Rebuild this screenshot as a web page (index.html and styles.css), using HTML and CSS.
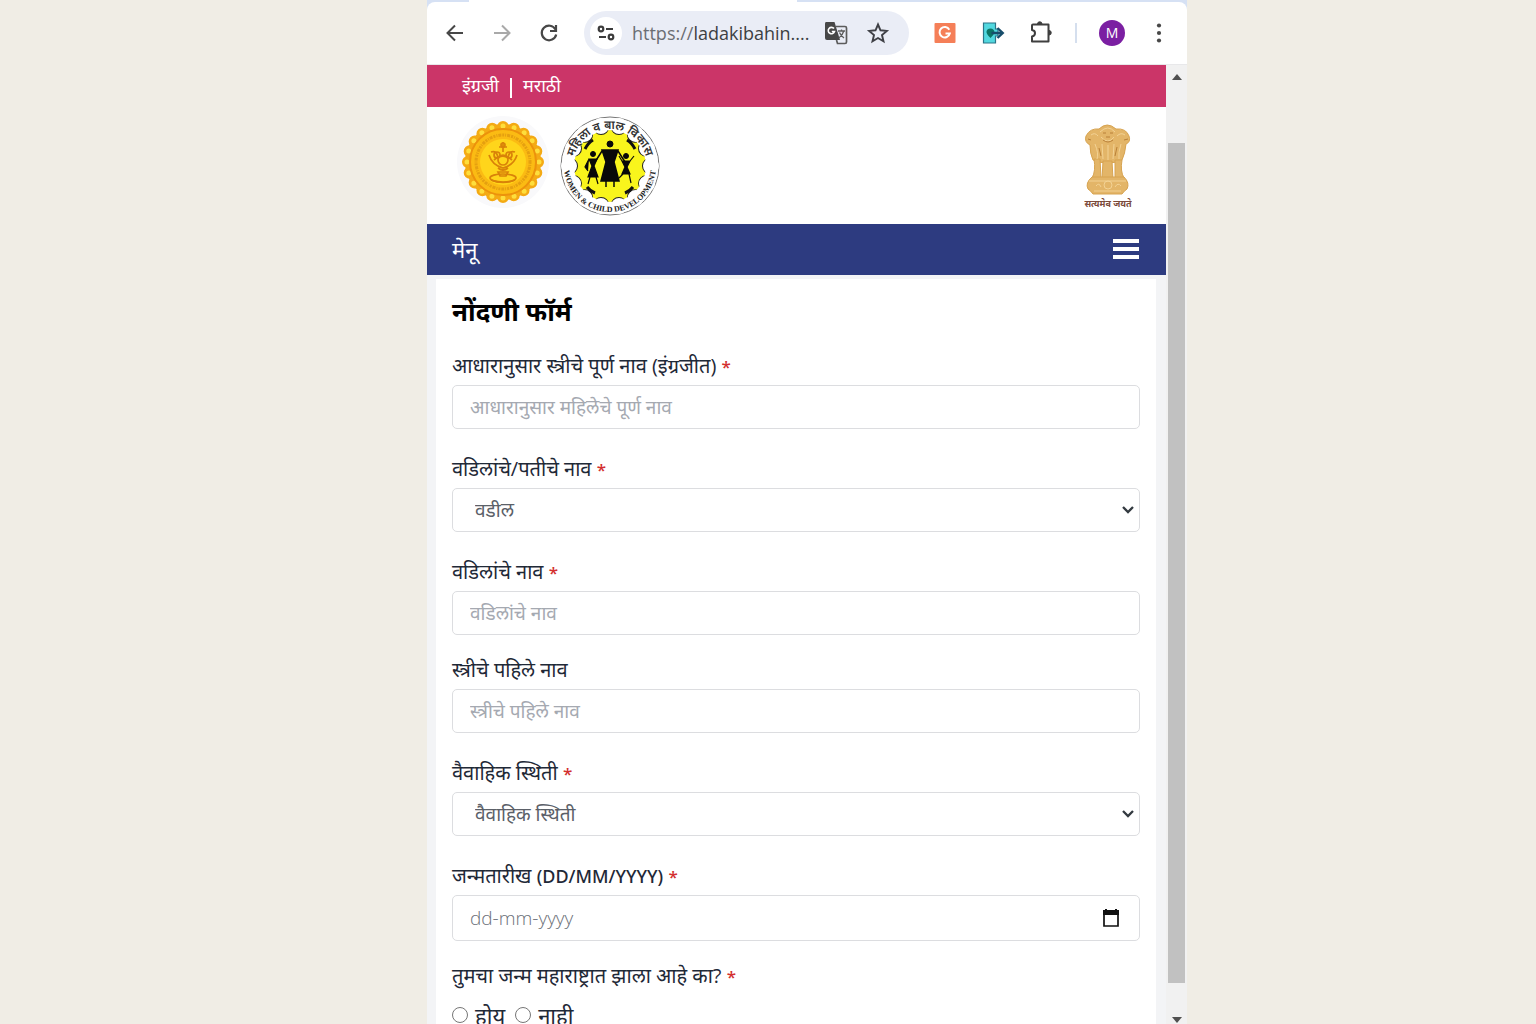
FILE: index.html
```html
<!DOCTYPE html>
<html lang="mr">
<head>
<meta charset="utf-8">
<meta name="viewport" content="width=device-width, initial-scale=1">
<title>नोंदणी फॉर्म</title>
<link rel="stylesheet" href="styles.css">
</head>
<body>
<div class="browser">
  <div class="tabstrip"><span class="tabstrip__active"></span></div>
  <div class="toolbar">
    <div class="toolbar__nav">
      <button class="icon-btn" aria-label="Back"><svg viewBox="0 0 24 24"><path d="M20 12H5M12 4.500L4.500 12L12 19.500" fill="none" stroke="#474747" stroke-width="2"/></svg></button>
      <button class="icon-btn" aria-label="Forward"><svg viewBox="0 0 24 24"><path d="M4 12H19M12 4.500L19.500 12L12 19.500" fill="none" stroke="#a9a9a9" stroke-width="2"/></svg></button>
      <button class="icon-btn" aria-label="Reload"><svg viewBox="0 0 24 24"><path d="M18.500 8.500A7.300 7.300 0 1 0 19.200 13.500" fill="none" stroke="#474747" stroke-width="2.200"/><path d="M19 4V10H13" fill="none" stroke="#474747" stroke-width="2.200"/></svg></button>
    </div>
    <div class="omnibox">
      <button class="omnibox__site" aria-label="Site information"><svg viewBox="0 0 24 24" fill="none" stroke="#3c3c3c" stroke-width="2.200"><circle cx="7" cy="8" r="2.300"/><path d="M12 8H19M5 16H12"/><circle cx="17" cy="16" r="2.300"/></svg></button>
      <span class="omnibox__url"><span class="omnibox__scheme">https://</span>ladakibahin....</span>
      <button class="icon-btn" aria-label="Translate"><svg viewBox="0 0 24 24"><path d="M2 1H10.500L16 19H3Q1 19 1 17V2.500Q1 1 2 1Z" fill="#474747"/><path d="M12 5.500H21Q22.500 5.500 22.500 7V21Q22.500 22.500 21 22.500H13.500L12.500 19" fill="none" stroke="#5c5c5c" stroke-width="1.700"/><path d="M10 7.600A3.200 3.200 0 1 0 10.500 10.500H7.800" fill="none" stroke="#fff" stroke-width="1.600"/><path d="M14 10H21M17.500 8.500V10M19.800 10Q18.500 14.500 14.800 17M15.500 11.500Q17 15 20 17" fill="none" stroke="#5c5c5c" stroke-width="1.300"/></svg></button>
      <button class="icon-btn" aria-label="Bookmark"><svg viewBox="0 0 24 24"><path d="M12 3.500L14.500 9.300L20.800 9.900L16 14L17.500 20.300L12 17L6.500 20.300L8 14L3.200 9.900L9.500 9.300Z" fill="none" stroke="#3f4046" stroke-width="1.900"/></svg></button>
    </div>
    <div class="toolbar__extensions">
      <button class="icon-btn" aria-label="Extension G"><svg viewBox="0 0 24 24"><rect x="1.500" y="2" width="21" height="20" rx="1" fill="#f57f58"/><path d="M16.300 8.700A5.200 5.200 0 1 0 16.800 12.500H12.500" fill="none" stroke="#fff" stroke-width="2"/></svg></button>
      <button class="icon-btn" aria-label="Extension"><svg viewBox="0 0 24 24"><path d="M2.500 2H14.500V8H17V15H14.500V22H2.500Z" fill="#52d8df" stroke="#2b7488" stroke-width="1.200"/><path d="M9.500 17Q5 12.500 5.500 10.500Q6 7.500 9.500 7.500Q13 7.500 13.500 11Q13 14 9.500 17Z" fill="#0b7566"/><path d="M10.500 12H21M16.500 7L21.800 12L16.500 17" fill="none" stroke="#174d6b" stroke-width="2.300"/></svg></button>
      <button class="icon-btn" aria-label="Extensions"><svg viewBox="0 0 24 24"><path d="M4 3.500H19.500V20.500H3V15.500Q6 15 6 12Q6 9.500 3 9V4.500Q3 3.500 4 3.500Z" fill="none" stroke="#3f3f3f" stroke-width="2" stroke-linejoin="round"/><path d="M8.500 3A2 2 0 0 1 13 3ZM20 9.500A2 2 0 0 1 20 14Z" fill="#3f3f3f" stroke="#3f3f3f"/></svg></button>
    </div>
    <div class="toolbar__profile">
      <span class="toolbar__divider"></span>
      <button class="avatar" aria-label="Profile">M</button>
      <button class="icon-btn" aria-label="More"><svg viewBox="0 0 24 24" fill="#474747"><circle cx="12" cy="4.500" r="2.100"/><circle cx="12" cy="12" r="2.100"/><circle cx="12" cy="19.500" r="2.100"/></svg></button>
    </div>
  </div>

  <div class="viewport">
    <div class="page">
      <div class="langbar">
        <a href="#">इंग्रजी</a><span class="langbar__sep"></span><a href="#">मराठी</a>
      </div>
      <header class="masthead">
        <div class="masthead__logos">
          <svg class="seal" viewBox="0 0 96 96" role="img" aria-label="Government seal">
            <circle cx="48" cy="46" r="46" fill="#f9f9fb"/>
            <g transform="translate(0 -2)">
            <circle cx="48" cy="48" r="38" fill="#f0a312"/>
            <circle cx="48" cy="48" r="35" fill="none" stroke="#f4aa14" stroke-width="12" stroke-linecap="round" stroke-dasharray="0 1" pathLength="20"/>
            <circle cx="48" cy="48" r="36" fill="none" stroke="#fede3c" stroke-width="5" stroke-linecap="round" stroke-dasharray="0 1" pathLength="20"/>
            <circle cx="48" cy="48" r="33" fill="#fbbb13" stroke="#ec920c" stroke-width="2"/>
            <circle cx="48" cy="48" r="27" fill="none" stroke="#e5a010" stroke-width="3" stroke-dasharray="2 1 1 1 3 1"/>
            <circle cx="48" cy="48" r="23" fill="#ffd51b"/>
            <g fill="none" stroke="#d98209" stroke-width="1.700">
              <path d="M48 28V38M44 33H52M34 41Q37 51 48 54Q59 51 62 41M36 38Q42 36 43 44M60 38Q54 36 53 44M39 46Q48 38 57 46M43 54Q48 58 53 54"/>
              <circle cx="48" cy="31" r="2"/><circle cx="42" cy="41" r="3"/><circle cx="54" cy="41" r="3"/><circle cx="48" cy="46" r="5"/>
              <path d="M43 58H53L51 62H45Z"/><ellipse cx="48" cy="64" rx="13" ry="4"/><path d="M36 66Q48 71 60 66"/>
            </g>
            </g>
          </svg>
          <svg class="wcd" viewBox="0 0 100 100" role="img" aria-label="महिला व बाल विकास">
            <defs>
              <path id="arc-top" d="M13 50A37 37 0 0 1 87 50"/>
              <path id="arc-bottom" d="M4 50A46 46 0 0 0 96 50"/>
            </defs>
            <circle cx="50" cy="50" r="49" fill="#fff" stroke="#777"/>
            <circle cx="50" cy="50" r="36" fill="#f9f51c"/>
            <circle cx="50" cy="50" r="40" fill="none" stroke="#222" stroke-width="16" stroke-linecap="round" stroke-dasharray="0 1" pathLength="14"/>
            <circle cx="50" cy="50" r="41" fill="none" stroke="#fff" stroke-width="16" stroke-linecap="round" stroke-dasharray="0 1" pathLength="14"/>
            <circle cx="50" cy="50" r="42" fill="none" stroke="#fff" stroke-width="12"/>
            <g fill="none" stroke="#111" stroke-width="3"><path d="M25 33Q28 27 33 24M67 24Q72 27 75 33M27 71Q30 75 35 77M65 77Q70 75 73 71"/></g>
            <g fill="#090909" stroke="#090909">
              <circle cx="50" cy="28" r="3"/><path d="M42 34H58L54 46L59 65H41L46 46ZM46 65V71M54 65V71M42 35L35 46M58 35L65 46" stroke-width="1.500"/>
              <circle cx="33" cy="38" r="2.500"/><path d="M29 43H37L34 50L38 61H28L32 50ZM30 61L28 68M36 61L38 68M29 43L25 51L28 55" stroke-width="1.200"/>
              <circle cx="66" cy="40" r="2.500"/><path d="M62 45H70L67 51L70 58H62L65 51ZM63 58L59 62M69 58L71 67M70 45L74 40M62 45L59 40" stroke-width="1.200"/>
            </g>
            <text class="wcd__top"><textPath href="#arc-top" startOffset="50%" text-anchor="middle">महिला व बाल विकास</textPath></text>
            <text class="wcd__bottom"><textPath href="#arc-bottom" startOffset="50%" text-anchor="middle">WOMEN &amp; CHILD DEVELOPMENT</textPath></text>
          </svg>
        </div>
        <svg class="emblem" viewBox="0 0 48 86" role="img" aria-label="सत्यमेव जयते">
          <g fill="#e3b568" stroke="#d7a350">
            <path d="M15 6Q23 -2 32 6Q42 5 45 13Q47 19 42 21Q41 31 38 37Q32 40 24 40Q15 40 9 37Q6 31 6 22Q0 19 2 13Q6 5 15 6Z"/>
            <path d="M10 36H16L17 55H8Q12 48 10 36ZM19 38H28L29 56H18ZM31 37H38Q36 48 40 55H31Z"/>
            <path d="M8 54H40Q46 60 43 66Q40 68 38 71H9Q7 68 4 66Q1 60 8 54Z"/>
          </g>
          <g fill="none" stroke="#f3d294">
            <path d="M16 9Q24 1 31 9M17 14Q24 22 30 14M7 12Q11 9 14 13M33 13Q37 9 41 12M11 21Q15 31 13 36M18 21L19 36M24 22V37M30 21L29 36M37 21Q34 30 35 36M5 58H42M10 68H37"/>
            <circle cx="24" cy="62" r="4"/><path d="M12 63Q15 59 17 64M31 64Q34 59 37 63"/>
          </g>
          <g fill="none" stroke="#b98038"><path d="M19 10H22M26 10H29M22 14H26M4 16L7 17M40 17L44 16M19 17Q24 21 29 17M15 25L17 33M33 24L31 33"/></g>
          <text class="emblem__motto" x="24" y="84" text-anchor="middle">सत्यमेव जयते</text>
        </svg>
      </header>
      <nav class="menubar">
        <span>मेनू</span>
        <button class="menubar__toggle" aria-label="मेनू"><svg viewBox="0 0 26 20" fill="#fff"><path d="M0 0H26V4H0ZM0 8H26V12H0ZM0 16H26V20H0Z"/></svg></button>
      </nav>
      <main class="content">
        <form class="form">
          <h1 class="form__title">नोंदणी फॉर्म</h1>
          <div class="field">
            <label for="fullname">आधारानुसार स्त्रीचे पूर्ण नाव (इंग्रजीत) <span class="req">*</span></label>
            <input class="control" id="fullname" type="text" placeholder="आधारानुसार महिलेचे पूर्ण नाव">
          </div>
          <div class="field">
            <label for="guardian">वडिलांचे/पतीचे नाव <span class="req">*</span></label>
            <div class="select"><select class="control" id="guardian"><option>वडील</option><option>पती</option></select><svg viewBox="0 0 14 10"><path d="M2 2L7 7L12 2" fill="none" stroke="#333a40" stroke-width="2.300"/></svg></div>
          </div>
          <div class="field field--close">
            <label for="father">वडिलांचे नाव <span class="req">*</span></label>
            <input class="control" id="father" type="text" placeholder="वडिलांचे नाव">
          </div>
          <div class="field">
            <label for="firstname">स्त्रीचे पहिले नाव</label>
            <input class="control" id="firstname" type="text" placeholder="स्त्रीचे पहिले नाव">
          </div>
          <div class="field">
            <label for="marital">वैवाहिक स्थिती <span class="req">*</span></label>
            <div class="select"><select class="control" id="marital"><option>वैवाहिक स्थिती</option></select><svg viewBox="0 0 14 10"><path d="M2 2L7 7L12 2" fill="none" stroke="#333a40" stroke-width="2.300"/></svg></div>
          </div>
          <div class="field field--close">
            <label for="dob">जन्मतारीख <span class="field__format">(DD/MM/YYYY)</span> <span class="req">*</span></label>
            <div class="date control"><input id="dob" type="text" placeholder="dd-mm-yyyy"><button type="button" aria-label="Calendar"><svg viewBox="0 0 16 18"><path d="M1 2H15V17H1Z" fill="none" stroke="#111" stroke-width="1.700"/><path d="M0 1H16V6H0ZM2 0H4V2H2ZM12 0H14V2H12Z" fill="#111"/></svg></button></div>
          </div>
          <fieldset class="field radios">
            <legend>तुमचा जन्म महाराष्ट्रात झाला आहे का? <span class="req">*</span></legend>
            <div class="radios__row">
              <label><input type="radio" name="born">होय</label>
              <label><input type="radio" name="born">नाही</label>
            </div>
          </fieldset>
        </form>
      </main>
    </div>
    <div class="scrollbar">
      <svg class="scrollbar__up" viewBox="0 0 10 6"><path d="M5 0L10 6H0Z" fill="#505050"/></svg>
      <span class="scrollbar__thumb"></span>
      <svg class="scrollbar__down" viewBox="0 0 10 6"><path d="M0 0H10L5 6Z" fill="#505050"/></svg>
    </div>
  </div>
</div>
</body>
</html>
```
FILE: styles.css
```css
* { box-sizing: border-box; }

body {
  margin: 0;
  height: 100vh;
  overflow: hidden;
  display: grid;
  grid-template-columns: 427fr 760fr 349fr;
  background: #f0ede5;
  font-family: "Open Sans", "Noto Sans", "Noto Sans Devanagari", sans-serif;
  font-size: 19px;
  color: #1f2937;
}

button { padding: 0; border: 0; background: none; font: inherit; color: inherit; }
svg { display: block; }

.browser {
  grid-column: 2;
  min-width: 0;
  min-height: 0;
  display: flex;
  flex-direction: column;
  background: #d6e1f4;
}

.tabstrip { flex: none; height: 2px; padding: 0 390px 0 42px; }
.tabstrip__active { display: block; height: 2px; background: #fff; }

.toolbar {
  flex: none;
  height: 63px;
  display: flex;
  align-items: center;
  padding: 0 16px;
  background: #fff;
  border-radius: 8px 8px 0 0;
  border-bottom: 1px solid #e8e8ea;
}
.toolbar__nav { display: flex; gap: 23px; margin-right: 23px; }
.toolbar__extensions { display: flex; gap: 24px; margin: 0 22px 0 24px; }
.toolbar__profile { display: flex; align-items: center; gap: 22px; }
.toolbar__divider { width: 2px; height: 20px; background: #d5dfee; }
.icon-btn { flex: none; width: 24px; height: 24px; }

.omnibox {
  flex: 1;
  min-width: 0;
  height: 44px;
  display: flex;
  align-items: center;
  padding: 0 19px 0 6px;
  background: #eaedf6;
  border-radius: 22px;
  gap: 18px;
}
.omnibox__site {
  flex: none;
  width: 32px;
  height: 32px;
  padding: 4px;
  background: #fff;
  border-radius: 50%;
}
.omnibox__url { flex: 1; min-width: 0; margin: 0 -8px; white-space: nowrap; color: #3c4043; font-size: 18px; }
.omnibox__scheme { color: #6b6e73; }

.avatar { width: 26px; height: 26px; border-radius: 50%; background: #7b1fa2; color: #fff; font-size: 14px; line-height: 26px; }

.viewport { flex: 1; min-height: 0; display: flex; }
.page { flex: 1; min-width: 0; overflow: hidden; background: #f3f4f6; }

.langbar {
  height: 42px;
  display: flex;
  align-items: center;
  gap: 11px;
  padding: 0 35px 2px;
  background: #cb3568;
  font-size: 18px;
}
.langbar a { color: #fff; text-decoration: none; }
.langbar__sep { width: 2px; height: 20px; margin-top: 6px; background: #fff; }

.masthead {
  height: 117px;
  display: flex;
  align-items: center;
  justify-content: space-between;
  padding: 0 34px 0 28px;
  background: #fff;
}
.masthead__logos { display: flex; align-items: flex-start; gap: 9px; }
.seal { width: 96px; height: 96px; }
.wcd { width: 100px; height: 100px; }
.wcd__top { font-size: 12px; font-weight: 600; fill: #333; }
.wcd__bottom { font: bold 8px "Liberation Serif", serif; fill: #222; }
.emblem { width: 48px; height: 86px; }
.emblem__motto { font-size: 9px; font-weight: 700; fill: #7b4a3a; }

.menubar {
  height: 51px;
  display: flex;
  align-items: center;
  justify-content: space-between;
  padding: 0 27px 2px 25px;
  background: #2d3b80;
  color: #fff;
  font-size: 22px;
}
.menubar__toggle { width: 26px; height: 20px; }

.content { padding: 4px 10px 0 9px; }
.form { padding: 0 16px 40px; background: #fff; }
.form__title { margin: 0; height: 71px; line-height: 64px; font-size: 26px; font-weight: 700; color: #000; }

.field { margin: 0 0 24px; }
.field--close { margin-bottom: 19px; }
.field > label, .field > legend { display: block; height: 35px; line-height: 32px; padding: 0; font-size: 20px; white-space: nowrap; }
.field__format { font-weight: 500; font-family: "Noto Sans", sans-serif; font-size: 18px; }
.req { color: #d32f2f; font-weight: 600; font-size: 17px; }

.control {
  display: block;
  width: 100%;
  height: 44px;
  padding: 0 17px;
  border: 1px solid #dcdde0;
  border-radius: 5px;
  background: #fff;
  font: inherit;
  color: #5b6068;
  outline: 0;
}
.control::placeholder { color: #a5a9b1; opacity: 1; }

.select { display: grid; align-items: center; }
.select > * { grid-area: 1 / 1; }
.select .control { appearance: none; padding-left: 22px; }
.select svg { justify-self: end; width: 14px; height: 10px; margin-right: 5px; pointer-events: none; }

.date { display: flex; align-items: center; height: 46px; padding: 0 20px 0 17px; }
.date input { flex: 1; min-width: 0; padding: 0; border: 0; outline: 0; font: inherit; font-weight: 300; }
.date input::placeholder { color: #6b7078; opacity: 1; }
.date button { width: 16px; height: 18px; }

.radios { border: 0; padding: 0; }
.radios__row { display: flex; gap: 10px; font-size: 22px; line-height: 40px; }
.radios__row label { display: flex; align-items: center; gap: 7px; }
.radios__row input { width: 16px; height: 16px; margin: 0; }

.scrollbar {
  flex: none;
  width: 21px;
  display: grid;
  grid-template-rows: 24px 54fr 840fr 33fr 8px;
  justify-items: center;
  align-items: center;
  background: #f1f1f1;
}
.scrollbar__up, .scrollbar__down { width: 10px; height: 6px; }
.scrollbar__thumb { grid-row: 3; width: 17px; height: 100%; background: #c1c1c1; }
.scrollbar__down { grid-row: 5; }
```
